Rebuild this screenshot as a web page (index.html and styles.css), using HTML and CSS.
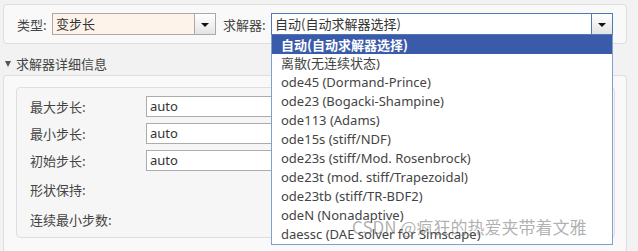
FILE: index.html
```html
<!DOCTYPE html>
<html lang="zh">
<head>
<meta charset="utf-8">
<title>求解器</title>
<link rel="stylesheet" href="styles.css">
</head>
<body>
<div class="panel top-panel">
  <div class="top-row">
    <span class="lbl type-lbl">类型:</span>
    <div class="select select-type">
      <span class="select-text">变步长</span>
      <span class="select-btn"><span class="tri"></span></span>
    </div>
    <span class="lbl solver-lbl">求解器:</span>
    <div class="select select-solver">
      <span class="select-text">自动(自动求解器选择)</span>
      <span class="select-btn"><span class="tri"></span></span>
      <ul class="dropdown">
        <li class="item active">自动(自动求解器选择)</li>
        <li class="item">离散(无连续状态)</li>
        <li class="item">ode45 (Dormand-Prince)</li>
        <li class="item">ode23 (Bogacki-Shampine)</li>
        <li class="item">ode113 (Adams)</li>
        <li class="item">ode15s (stiff/NDF)</li>
        <li class="item">ode23s (stiff/Mod. Rosenbrock)</li>
        <li class="item">ode23t (mod. stiff/Trapezoidal)</li>
        <li class="item">ode23tb (stiff/TR-BDF2)</li>
        <li class="item">odeN (Nonadaptive)</li>
        <li class="item">daessc (DAE solver for Simscape)</li>
      </ul>
    </div>
  </div>
</div>
<div class="section-head"><span class="head-tri"></span><span>求解器详细信息</span></div>
<div class="panel details-panel">
  <div class="inner-panel">
    <div class="field"><span class="lbl field-lbl">最大步长:</span><div class="input">auto</div></div>
    <div class="field"><span class="lbl field-lbl">最小步长:</span><div class="input">auto</div></div>
    <div class="field"><span class="lbl field-lbl">初始步长:</span><div class="input">auto</div></div>
    <div class="field text-field"><span class="lbl field-lbl">形状保持:</span></div>
    <div class="field text-field"><span class="lbl field-lbl">连续最小步数:</span></div>
  </div>
</div>
<div class="watermark">CSDN @疯狂的热爱夹带着文雅</div>
</body>
</html>
```
FILE: styles.css
```css
* { box-sizing: border-box; }
html, body { margin: 0; padding: 0; }
body {
  width: 638px;
  height: 251px;
  overflow: hidden;
  background: #f2f2f2;
  font-family: "Noto Sans", "Noto Sans CJK SC", sans-serif;
  font-size: 13px;
  color: #333;
  position: relative;
}
.panel {
  margin: 0 11px 0 3px;
  border: 1px solid #dedede;
  border-radius: 4px;
  background: #f9f9f9;
}
.top-panel {
  margin-top: 4px;
  height: 40px;
  padding: 8px 0 0 13px;
}
.top-row {
  display: flex;
  align-items: center;
  height: 22px;
}
.lbl {
  font-family: "Noto Sans CJK SC", sans-serif;
  color: #444;
  font-size: 13px;
}
.type-lbl { width: 35px; }
.solver-lbl { margin-left: 7px; width: 48px; }
.select {
  position: relative;
  display: flex;
  height: 22px;
  border: 1px solid #a9a9a9;
  background: #fff;
}
.select-type {
  width: 164px;
  background: #fdf3ea;
}
.select-solver {
  width: 342px;
  border-color: #4f78b5;
}
.select-text {
  flex: 1;
  padding-left: 3px;
  line-height: 20px;
  font-family: "Noto Sans CJK SC", sans-serif;
  color: #333;
  white-space: nowrap;
}
.select-btn {
  width: 21px;
  border-left: 1px solid #a9a9a9;
  background: linear-gradient(#ffffff, #e4e4e4);
  display: flex;
  align-items: center;
  justify-content: center;
}
.select-solver .select-btn { border-left-color: #4f78b5; }
.tri {
  width: 0;
  height: 0;
  border-left: 4px solid transparent;
  border-right: 4px solid transparent;
  border-top: 4px solid #111;
  margin-top: 1px;
}
.dropdown {
  position: absolute;
  left: -1px;
  top: 21px;
  width: 342px;
  margin: 0;
  padding: 0;
  list-style: none;
  background: #fff;
  border: 1px solid #7fa0cc;
  border-top: none;
  z-index: 5;
}
.item {
  height: 19px;
  line-height: 19px;
  padding-left: 9px;
  color: #444;
  white-space: nowrap;
}
.item.active {
  background: #3a5ba9;
  color: #fff;
  font-weight: bold;
  font-family: "Noto Sans CJK SC", sans-serif;
}
.section-head {
  height: 31px;
  display: flex;
  align-items: center;
  padding: 8px 0 0 5px;
  font-family: "Noto Sans CJK SC", sans-serif;
  color: #444;
}
.head-tri {
  width: 0;
  height: 0;
  border-left: 3.5px solid transparent;
  border-right: 3.5px solid transparent;
  border-top: 6px solid #555;
  margin-right: 5px;
}
.details-panel {
  height: 176px;
  padding: 11px 11px 0 12px;
  border-bottom: none;
  border-radius: 4px 4px 0 0;
}
.inner-panel {
  border: 1px solid #dedede;
  border-radius: 4px;
  background: #f6f6f6;
  padding: 8px 0 6px 13px;
  display: flex;
  flex-direction: column;
  gap: 6px;
}
.field {
  display: flex;
  align-items: center;
  height: 21px;
}
.text-field { height: 24px; }
.field-lbl { width: 116px; }
.input {
  width: 460px;
  height: 21px;
  border: 1px solid #acacac;
  background: #fff;
  padding-left: 3px;
  line-height: 19px;
  color: #333;
}
.watermark {
  position: absolute;
  left: 352px;
  top: 214px;
  font-family: "Noto Sans CJK SC", sans-serif;
  font-size: 17px;
  color: rgba(110, 110, 110, 0.55);
  white-space: nowrap;
  z-index: 10;
}
```
